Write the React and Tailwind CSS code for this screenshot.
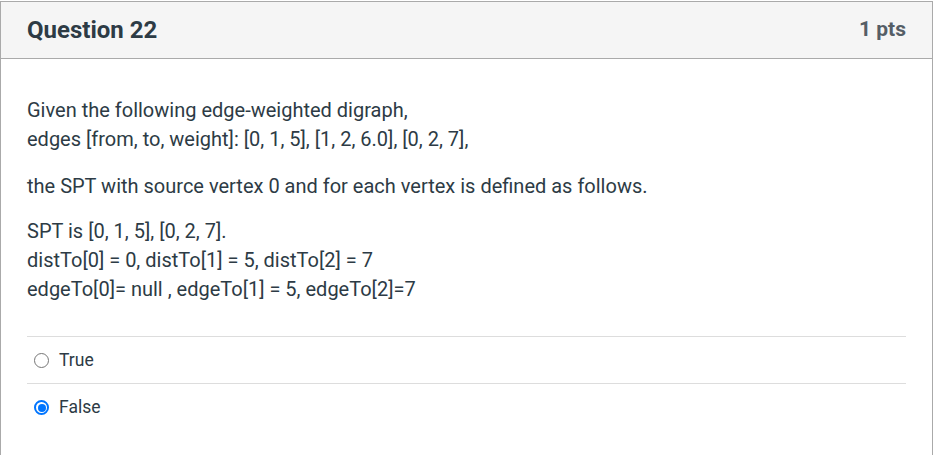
export default function App() {
  return (
    <div className="w-[933px] h-[455px] bg-white pt-[1px] overflow-hidden" style={{ fontFamily: "Roboto, 'Noto Sans', sans-serif" }}>
      <div className="border border-[#aaaaaa] h-[470px] w-[933px]">
        <div className="h-[57px] bg-[#f5f5f5] border-b border-[#aaaaaa] flex items-center justify-between pl-[26px] pr-[26px]">
          <div className="text-[24px] font-bold text-[#2d3b45]">Question 22</div>
          <div className="text-[21px] font-bold text-[#555e66]">1 pts</div>
        </div>
        <div className="px-[26px] pt-[37px] text-[20px] leading-[29px] text-[#2d3b45]">
          <p>Given the following edge-weighted digraph,<br />edges [from, to, weight]: [0, 1, 5], [1, 2, 6.0], [0, 2, 7],</p>
          <p className="mt-[18px]">the SPT with source vertex 0 and for each vertex is defined as follows.</p>
          <p className="mt-[16px]">SPT is [0, 1, 5], [0, 2, 7].<br />distTo[0] = 0, distTo[1] = 5, distTo[2] = 7<br />edgeTo[0]= null , edgeTo[1] = 5, edgeTo[2]=7</p>
          <div className="mt-[32px] border-t border-[#dddddd]">
            <div className="flex items-center h-[47px] border-b border-[#dddddd]">
              <span className="ml-[7px] w-[15px] h-[15px] rounded-full border border-[#767676] bg-white"></span>
              <span className="ml-[10px] text-[17.5px]">True</span>
            </div>
            <div className="flex items-center h-[47px]">
              <span className="ml-[7px] w-[15px] h-[15px] rounded-full border-2 border-[#0075ff] bg-white flex items-center justify-center">
                <span className="w-[8px] h-[8px] rounded-full bg-[#0075ff]"></span>
              </span>
              <span className="ml-[10px] text-[17.5px]">False</span>
            </div>
          </div>
        </div>
      </div>
    </div>
  );
}
